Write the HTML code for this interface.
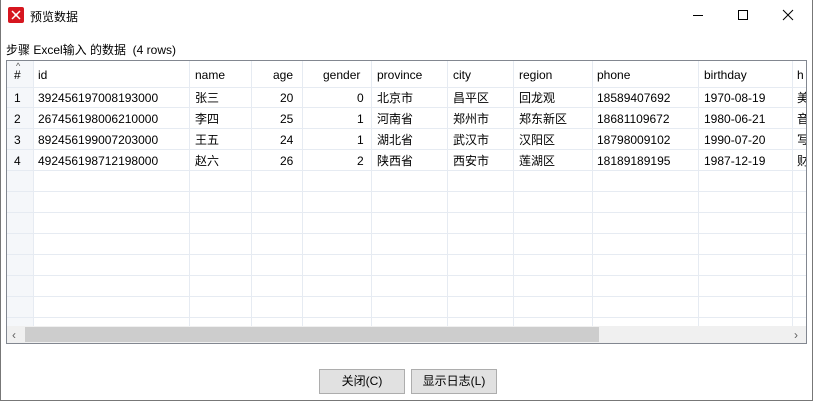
<!DOCTYPE html>
<html><head><meta charset="utf-8"><style>
*{margin:0;padding:0;box-sizing:border-box}
body{width:813px;height:401px;background:#fff;font-family:"Liberation Sans","Noto Sans CJK SC",sans-serif;font-size:12px;color:#000;position:relative;overflow:hidden;border:1px solid #777;border-top:none}
.a{position:absolute;white-space:nowrap}
.t{position:absolute;left:5px;top:60px;width:801px;height:284px;border:1px solid #828790;overflow:hidden}
.vl{position:absolute;top:0;width:1px;height:265px;background:#e6ebf2}
.hl{position:absolute;left:0;width:800px;height:1px;background:#e6ebf2}
.c{position:absolute;white-space:nowrap;font-size:12px;line-height:14px;height:14px}
.btn{position:absolute;top:369px;height:25px;width:86px;background:#e1e1e1;border:1px solid #adadad;text-align:center;line-height:23px;font-size:12px}
</style></head><body>
<div class="a" style="left:7px;top:7px;width:16px;height:16px;background:#d6161f;border-radius:2px"></div>
<svg class="a" style="left:7px;top:7px" width="16" height="16"><g stroke="#fff" stroke-width="1.5"><line x1="4" y1="4" x2="12" y2="12"/><line x1="12" y1="4" x2="4" y2="12"/></g><circle cx="8" cy="8" r="1.5" fill="#fff"/></svg>
<div class="a" style="left:29px;top:8px;font-size:12px">预览数据</div>
<div class="a" style="left:692px;top:15px;width:10px;height:1px;background:#000"></div>
<div class="a" style="left:737px;top:10px;width:10px;height:10px;border:1px solid #000"></div>
<svg class="a" style="left:781px;top:9px" width="12" height="12"><path d="M1 1L11 11M11 1L1 11" stroke="#000" stroke-width="1"/></svg>
<div class="a" style="left:5px;top:41px">步骤 Excel输入 的数据 &nbsp;(4 rows)</div>
<div class="t">
<div class="a" style="left:0;top:0;width:26px;height:265px;background:#f5f7fa"></div>
<div class="vl" style="left:26px"></div><div class="vl" style="left:182px"></div><div class="vl" style="left:244px"></div><div class="vl" style="left:295px"></div><div class="vl" style="left:364px"></div><div class="vl" style="left:440px"></div><div class="vl" style="left:506px"></div><div class="vl" style="left:585px"></div><div class="vl" style="left:691px"></div><div class="vl" style="left:785px"></div>
<div class="hl" style="top:26px"></div><div class="hl" style="top:46px"></div><div class="hl" style="top:67px"></div><div class="hl" style="top:88px"></div><div class="hl" style="top:109px"></div><div class="hl" style="top:130px"></div><div class="hl" style="top:151px"></div><div class="hl" style="top:172px"></div><div class="hl" style="top:193px"></div><div class="hl" style="top:214px"></div><div class="hl" style="top:235px"></div><div class="hl" style="top:256px"></div>
<div class="c" style="left:9px;top:-2px;font-size:9px;color:#555">^</div>
<div class="c" style="left:7px;top:7px">#</div>
<div class="c" style="left:31px;top:7px">id</div><div class="c" style="left:188px;top:7px">name</div><div class="c" style="left:266px;top:7px">age</div><div class="c" style="left:316px;top:7px">gender</div><div class="c" style="left:370px;top:7px">province</div><div class="c" style="left:446px;top:7px">city</div><div class="c" style="left:512px;top:7px">region</div><div class="c" style="left:590px;top:7px">phone</div><div class="c" style="left:697px;top:7px">birthday</div><div class="c" style="left:790px;top:7px">h</div>
<div class="c" style="left:7px;top:30px">1</div><div class="c" style="left:31px;top:30px">392456197008193000</div><div class="c" style="left:188px;top:30px">张三</div><div class="c" style="left:273px;top:30px">20</div><div class="c" style="left:350px;top:30px">0</div><div class="c" style="left:370px;top:30px">北京市</div><div class="c" style="left:446px;top:30px">昌平区</div><div class="c" style="left:512px;top:30px">回龙观</div><div class="c" style="left:590px;top:30px">18589407692</div><div class="c" style="left:697px;top:30px">1970-08-19</div><div class="c" style="left:790px;top:30px">美</div>
<div class="c" style="left:7px;top:51px">2</div><div class="c" style="left:31px;top:51px">267456198006210000</div><div class="c" style="left:188px;top:51px">李四</div><div class="c" style="left:273px;top:51px">25</div><div class="c" style="left:350px;top:51px">1</div><div class="c" style="left:370px;top:51px">河南省</div><div class="c" style="left:446px;top:51px">郑州市</div><div class="c" style="left:512px;top:51px">郑东新区</div><div class="c" style="left:590px;top:51px">18681109672</div><div class="c" style="left:697px;top:51px">1980-06-21</div><div class="c" style="left:790px;top:51px">音</div>
<div class="c" style="left:7px;top:72px">3</div><div class="c" style="left:31px;top:72px">892456199007203000</div><div class="c" style="left:188px;top:72px">王五</div><div class="c" style="left:273px;top:72px">24</div><div class="c" style="left:350px;top:72px">1</div><div class="c" style="left:370px;top:72px">湖北省</div><div class="c" style="left:446px;top:72px">武汉市</div><div class="c" style="left:512px;top:72px">汉阳区</div><div class="c" style="left:590px;top:72px">18798009102</div><div class="c" style="left:697px;top:72px">1990-07-20</div><div class="c" style="left:790px;top:72px">写</div>
<div class="c" style="left:7px;top:93px">4</div><div class="c" style="left:31px;top:93px">492456198712198000</div><div class="c" style="left:188px;top:93px">赵六</div><div class="c" style="left:273px;top:93px">26</div><div class="c" style="left:350px;top:93px">2</div><div class="c" style="left:370px;top:93px">陕西省</div><div class="c" style="left:446px;top:93px">西安市</div><div class="c" style="left:512px;top:93px">莲湖区</div><div class="c" style="left:590px;top:93px">18189189195</div><div class="c" style="left:697px;top:93px">1987-12-19</div><div class="c" style="left:790px;top:93px">财</div>
<div class="a" style="left:0;top:265px;width:800px;height:17px;background:#f0f0f0"></div>
<div class="a" style="left:18px;top:266px;width:574px;height:15px;background:#cdcdcd"></div>
<div class="c" style="left:5px;top:267px;color:#606060">‹</div>
<div class="c" style="left:787px;top:267px;color:#606060">›</div>
</div>
<div class="btn" style="left:318px">关闭(C)</div>
<div class="btn" style="left:410px">显示日志(L)</div>
</body></html>
